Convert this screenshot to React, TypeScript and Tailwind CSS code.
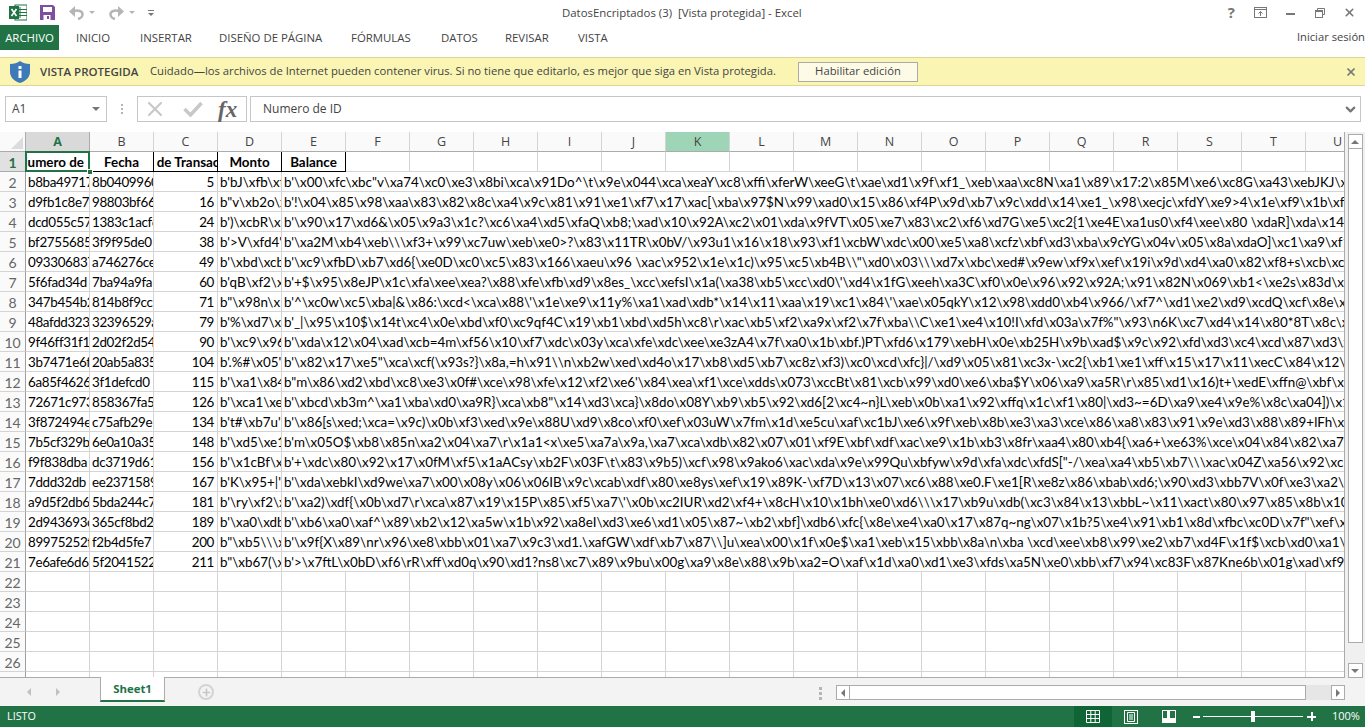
import React from 'react';
import { ChevronDown, Plus, X } from 'lucide-react';

const UI = "font-['Open_Sans','Noto_Sans',sans-serif]";
const LATO = "font-['Lato','Liberation_Sans',sans-serif]";
const CELL = `${LATO} text-[13.4px] text-black`;

const tabs = [
  ['INICIO', 'w-[35px]'],
  ['INSERTAR', 'w-[50px]'],
  ['DISEÑO DE PÁGINA', 'w-[103px]'],
  ['FÓRMULAS', 'w-[61px]'],
  ['DATOS', 'w-[35px]'],
  ['REVISAR', 'w-[44px]'],
  ['VISTA', 'w-[29px]'],
];

const letters = 'ABCDEFGHIJKLMNOPQRSTU'.split('');

const ids = ['b8ba49717', 'd9fb1c8e7', 'dcd055c57', 'bf2755685', '093306837', '5f6fad34d', '347b454b2', '48afdd323', '9f46ff31f1', '3b7471e6f', '6a85f4626', '72671c973', '3f872494e', '7b5cf329b', 'f9f838dba', '7ddd32db', 'a9d5f2db6', '2d943693c', '89975252f', '7e6afe6d6'];
const dates = ['8b0409960', '98803bf66', '1383c1acf6', '3f9f95de0', 'a746276ce', '7ba94a9fa', '814b8f9cc', '32396529a', '2d02f2d54', '20ab5a835', '3f1defcd0', '858367fa5', 'c75afb29e', '6e0a10a35', 'dc3719d61', 'ee2371589', '5bda244c7', '365cf8bd2', 'f2b4d5fe7', '5f2041522'];
const nums = [5, 16, 24, 38, 49, 60, 71, 79, 90, 104, 115, 126, 134, 148, 156, 167, 181, 189, 200, 211];
const montos = [
  String.raw`b'bJ\xfb\xfe'`, String.raw`b"v\xb2o\x1`, String.raw`b')\xcbR\x8`, String.raw`b'>V\xfd4'`, String.raw`b'\xbd\xcb'`,
  String.raw`b'qB\xf2\x8`, String.raw`b"\x98n\x1`, String.raw`b'%\xd7\x9`, String.raw`b'\xc9\x96'`, String.raw`b'.%#\x05'`,
  String.raw`b'\xa1\x84'`, String.raw`b'\xca1\xe`, String.raw`b't#\xb7u'`, String.raw`b'\xd5\xe1`, String.raw`b'\x1cBf\x1`,
  String.raw`b'K\x95+|'`, String.raw`b'\ry\xf2\x`, String.raw`b'\xa0\xdb`, String.raw`b"\xb5\\\x1`, String.raw`b"\xb67(\x`,
];
const balances = [
  String.raw`b'\x00\xfc\xbc"v\xa74\xc0\xe3\x8bi\xca\x91Do^\t\x9e\x044\xca\xeaY\xc8\xffi\xferW\xeeG\t\xae\xd1\x9f\xf1_\xeb\xaa\xc8N\xa1\x89\x17:2\x85M\xe6\xc8G\xa43\xebJKJ\x12`,
  String.raw`b'!\x04\x85\x98\xaa\x83\x82\x8c\xa4\x9c\x81\x91\xe1\xf7\x17\xac[\xba\x97$N\x99\xad0\x15\x86\xf4P\x9d\xb7\x9c\xdd\x14\xe1_\x98\xecjc\xfdY\xe9>4\x1e\xf9\x1b\xf7\x12`,
  String.raw`b'\x90\x17\xd6&\x05\x9a3\x1c?\xc6\xa4\xd5\xfaQ\xb8;\xad\x10\x92A\xc2\x01\xda\x9fVT\x05\xe7\x83\xc2\xf6\xd7G\xe5\xc2{1\xe4E\xa1us0\xf4\xee\x80 \xdaR]\xda\x14\x12`,
  String.raw`b'\xa2M\xb4\xeb\\\xf3+\x99\xc7uw\xeb\xe0>?\x83\x11TR\x0bV/\x93u1\x16\x18\x93\xf1\xcbW\xdc\x00\xe5\xa8\xcfz\xbf\xd3\xba\x9cYG\x04v\x05\x8a\xdaO]\xc1\xa9\xf1\x12`,
  String.raw`b'\xc9\xfbD\xb7\xd6{\xe0D\xc0\xc5\x83\x166\xaeu\x96 \xac\x952\x1e\x1c)\x95\xc5\xb4B\\"\xd0\x03\\\xd7x\xbc\xed#\x9ew\xf9x\xef\x19i\x9d\xd4\xa0\x82\xf8+s\xcb\xc1\x12`,
  String.raw`b'+$\x95\x8eJP\x1c\xfa\xee\xea?\x88\xfe\xfb\xd9\x8es_\xcc\xefsI\x1a(\xa38\xb5\xcc\xd0\'\xd4\x1fG\xeeh\xa3C\xf0\x0e\x96\x92\x92A;\x91\x82N\x069\xb1<\xe2s\x83d\x12`,
  String.raw`b'^\xc0w\xc5\xba|&\x86:\xcd<\xca\x88\'\x1e\xe9\x11y%\xa1\xad\xdb*\x14\x11\xaa\x19\xc1\x84\'\xae\x05qkY\x12\x98\xdd0\xb4\x966/\xf7^\xd1\xe2\xd9\xcdQ\xcf\x8e\x12`,
  String.raw`b'_|\x95\x10$\x14t\xc4\x0e\xbd\xf0\xc9qf4C\x19\xb1\xbd\xd5h\xc8\r\xac\xb5\xf2\xa9x\xf2\x7f\xba\\C\xe1\xe4\x10!I\xfd\x03a\x7f%"\x93\n6K\xc7\xd4\x14\x80*8T\x8c\x12`,
  String.raw`b'\xda\x12\x04\xad\xcb=4m\xf56\x10\xf7\xdc\x03y\xca\xfe\xdc\xee\xe3zA4\x7f\xa0\x1b\xbf.)PT\xfd6\x179\xebH\x0e\xb25H\x9b\xad$\x9c\x92\xfd\xd3\xc4\xcd\x87\xd3\x12`,
  String.raw`b'\x82\x17\xe5"\xca\xcf(\x93s?}\x8a,=h\x91\\n\xb2w\xed\xd4o\x17\xb8\xd5\xb7\xc8z\xf3)\xc0\xcd\xfc}|/\xd9\x05\x81\xc3x-\xc2{\xb1\xe1\xff\x15\x17\x11\xecC\x84\x12\x12`,
  String.raw`b"m\x86\xd2\xbd\xc8\xe3\x0f#\xce\x98\xfe\x12\xf2\xe6'\x84\xea\xf1\xce\xdds\x073\xccBt\x81\xcb\x99\xd0\xe6\xba$Y\x06\xa9\xa5R\r\x85\xd1\x16)t+\xedE\xffn@\xbf\x12`,
  String.raw`b'\xbcd\xb3m^\xa1\xba\xd0\xa9R}\xca\xb8"\x14\xd3\xca}\x8do\x08Y\xb9\xb5\x92\xd6[2\xc4~n}L\xeb\x0b\xa1\x92\xffq\x1c\xf1\x80|\xd3~=6D\xa9\xe4\x9e%\x8c\xa04])\x12`,
  String.raw`b'\x86[s\xed;\xca=\x9c)\x0b\xf3\xed\x9e\x88U\xd9\x8co\xf0\xef\x03uW\x7fm\x1d\xe5cu\xaf\xc1bJ\xe6\x9f\xeb\x8b\xe3\xa3\xce\x86\xa8\x83\x91\x9e\xd3\x88\x89+lFh\x12`,
  String.raw`b'm\x05O$\xb8\x85n\xa2\x04\xa7\r\x1a1<x\xe5\xa7a\x9a,\xa7\xca\xdb\x82\x07\x01\xf9E\xbf\xdf\xac\xe9\x1b\xb3\x8fr\xaa4\x80\xb4{\xa6+\xe63%\xce\x04\x84\x82\xa7\x12`,
  String.raw`b'+\xdc\x80\x92\x17\x0fM\xf5\x1aACsy\xb2F\x03F\t\x83\x9b5)\xcf\x98\x9ako6\xac\xda\x9e\x99Qu\xbfyw\x9d\xfa\xdc\xfdS["-/\xea\xa4\xb5\xb7\\\xac\x04Z\xa56\x92\xc1\x12`,
  String.raw`b'\xda\xebkI\xd9we\xa7\x00\x08y\x06\x06IB\x9c\xcab\xdf\x80\xe8ys\xef\x19\x89K-\xf7D\x13\x07\xc6\x88\xe0.F\xe1[R\xe8z\x86\xbab\xd6;\x90\xd3\xbb7V\x0f\xe3\xa2\x12`,
  String.raw`b'\xa2)\xdf{\x0b\xd7\r\xca\x87\x19\x15P\x85\xf5\xa7\'\x0b\xc2IUR\xd2\xf4+\x8cH\x10\x1bh\xe0\xd6\\\x17\xb9u\xdb(\xc3\x84\x13\xbbL~\x11\xact\x80\x97\x85\x8b\x10\x12`,
  String.raw`b'\xb6\xa0\xaf^\x89\xb2\x12\xa5w\x1b\x92\xa8eI\xd3\xe6\xd1\x05\x87~\xb2\xbf]\xdb6\xfc{\x8e\xe4\xa0\x17\x87q~ng\x07\x1b?5\xe4\x91\xb1\x8d\xfbc\xc0D\x7f"\xef\x12`,
  String.raw`b'\x9f{X\x89\nr\x96\xe8\xbb\x01\xa7\x9c3\xd1.\xafGW\xdf\xb7\x87\\]u\xea\x00\x1f\x0e$\xa1\xeb\x15\xbb\x8a\n\xba \xcd\xee\xb8\x99\xe2\xb7\xd4F\x1f$\xcb\xd0\xa1\x12`,
  String.raw`b'>\x7ftL\x0bD\xf6\rR\xff\xd0q\x90\xd1?ns8\xc7\x89\x9bu\x00g\xa9\x8e\x88\x9b\xa2=O\xaf\x1d\xa0\xd1\xe3\xfds\xa5N\xe0\xbb\xf7\x94\xc83F\x87Kne6b\x01g\xad\xf9\x12`,
];

const headers = ['Fecha', 'Tipo de Transaccion', 'Monto', 'Balance'];

function Undo({ flip }: { flip?: boolean }) {
  return (
    <svg width="15" height="14" viewBox="0 0 15 14" fill="none" className={`ml-[14px] ${flip ? '-scale-x-100' : ''}`}>
      <path d="M0 5.500L6 0v11z" fill="#b5b5b5" />
      <path d="M4 5.500C9 3.500 13.800 5 13.500 8.500 13.300 11 11 12.500 9 13" stroke="#b5b5b5" strokeWidth="2.500" />
    </svg>
  );
}

function TitleBar() {
  return (
    <div className="h-[25px] flex items-center relative">
      <svg width="18" height="17" viewBox="0 0 18 17" className="ml-[9px]">
        <rect x="6" y="1" width="12" height="15" fill="#fff" stroke="#217346" />
        <path d="M11 3v11M6 5.500h12M6 8.500h12M6 11.500h12" stroke="#217346" />
        <rect x="0" y="2" width="10" height="13" fill="#217346" />
        <path d="M2.500 5l5 7M7.500 5l-5 7" stroke="#fff" strokeWidth="1.600" />
      </svg>
      <svg width="15" height="15" viewBox="0 0 15 15" className="ml-[13px]">
        <path d="M0 0h13l2 2v13H0z" fill="#7e4f9e" />
        <rect x="3" y="2" width="9" height="5" fill="#fff" />
        <rect x="3.500" y="10" width="7" height="5" fill="#fff" />
        <rect x="7" y="11" width="2" height="3" fill="#7e4f9e" />
      </svg>
      <Undo />
      <span className="ml-[5px] w-0 h-0 border-x-[3px] border-x-transparent border-t-[3px] border-t-[#b5b5b5]" />
      <Undo flip />
      <span className="ml-[5px] w-0 h-0 border-x-[3px] border-x-transparent border-t-[3px] border-t-[#b5b5b5]" />
      <span className="ml-[13px] flex flex-col items-center gap-[2px]">
        <span className="w-[6px] h-px bg-[#777]" />
        <span className="w-0 h-0 border-x-[3px] border-x-transparent border-t-[3px] border-t-[#777]" />
      </span>
      <div className={`${UI} absolute left-[562px] top-[4px] text-[11.4px] text-[#444] whitespace-pre`}>DatosEncriptados (3)  [Vista protegida] - Excel</div>
      <div className="ml-auto mr-[9px] flex items-center">
        <span className={`${UI} text-[#777] font-bold text-[15px] leading-none`}>?</span>
        <svg width="14" height="11" viewBox="0 0 14 11" fill="none" className="ml-[19px]">
          <rect x=".5" y=".5" width="12" height="10" stroke="#777" />
          <path d="M1 2.500h12M6.500 9V4.500M4.500 6.500l2-2 2 2" stroke="#777" />
        </svg>
        <span className="ml-[18px] mt-[3px] w-[9px] h-[2px] bg-[#777]" />
        <svg width="10" height="10" viewBox="0 0 10 10" fill="none" className="ml-[20px]">
          <path d="M2.500 2.500V.5h7v6h-2" stroke="#777" />
          <rect x=".5" y="2.500" width="7" height="7" stroke="#777" />
          <path d="M1 3.500h6" stroke="#777" />
        </svg>
        <X size={13} strokeWidth={3} className="ml-[18px] text-[#777]" />
      </div>
    </div>
  );
}

function RibbonTabs() {
  return (
    <div className={`${UI} h-[25px] flex items-center text-[11.4px] text-[#444]`}>
      <div className="w-[59px] h-full bg-[#217346] text-white flex items-center justify-center">ARCHIVO</div>
      <div className="ml-[17px] flex gap-[29px]">
        {tabs.map(([name, w]) => (
          <span key={name} className={`${w} whitespace-nowrap`}>{name}</span>
        ))}
      </div>
      <span className="ml-auto text-[11.2px] text-[#444] whitespace-nowrap">Iniciar sesión</span>
    </div>
  );
}

function ProtectedBar() {
  return (
    <div className={`${UI} mt-[7px] h-[29px] bg-[#fbf5b4] border-y border-[#dcd68e] flex items-center text-[11.270px] text-[#444]`}>
      <svg width="20" height="22" viewBox="0 0 20 22" className="ml-[10px]">
        <path d="M10 0c2.500 2 6 3 10 3v8c0 5-4 9-10 11C4 20 0 16 0 11V3c4 0 7.500-1 10-3z" fill="#3f7ab8" />
        <rect x="8.500" y="5" width="3" height="3" fill="#fff" />
        <rect x="8.500" y="9.500" width="3" height="7.500" fill="#fff" />
      </svg>
      <span className="ml-[10px] w-[110px] font-semibold text-[11.500px] text-[#444] whitespace-nowrap">VISTA PROTEGIDA</span>
      <span className="w-[648px] whitespace-nowrap">Cuidado—los archivos de Internet pueden contener virus. Si no tiene que editarlo, es mejor que siga en Vista protegida.</span>
      <button className="w-[120px] h-[20px] bg-[#fdfbe6] border border-[#ababab] flex items-center justify-center text-[#444] text-[11.270px]">Habilitar edición</button>
      <X size={12} strokeWidth={3.500} className="ml-auto mr-[8px] text-[#777]" />
    </div>
  );
}

function FormulaBar() {
  return (
    <div className="mt-[10px] h-[26px] flex items-stretch">
      <div className={`${UI} ml-[5px] w-[102px] border border-[#c6c6c6] flex items-center pl-[6px] pr-[6px] text-[12px] text-[#444]`}>
        A1
        <span className="ml-auto w-0 h-0 border-x-[4px] border-x-transparent border-t-[4px] border-t-[#777]" />
      </div>
      <div className="w-[30px] flex flex-col items-center justify-center gap-[2px]">
        <span className="w-[2px] h-[2px] bg-[#b5b5b5]" />
        <span className="w-[2px] h-[2px] bg-[#b5b5b5]" />
        <span className="w-[2px] h-[2px] bg-[#b5b5b5]" />
      </div>
      <div className="w-[110px] border border-[#c6c6c6] flex items-center">
        <X size={24} strokeWidth={2.200} className="ml-[5px] text-[#c8c8c8]" />
        <svg width="20" height="16" viewBox="0 0 20 16" fill="none" className="ml-[16px]">
          <path d="M1.500 8l6 6L18.500 2" stroke="#c8c8c8" strokeWidth="3.500" />
        </svg>
        <span className="ml-[15px] font-['Liberation_Serif',serif] italic font-bold text-[23px] leading-none text-[#666]">fx</span>
      </div>
      <div className={`${UI} ml-[3px] mr-[4px] flex-1 border border-[#c6c6c6] flex items-center pl-[12px] pr-[2px] text-[12px] text-[#444]`}>
        Numero de ID
        <ChevronDown size={15} strokeWidth={3.500} className="ml-auto text-[#777]" />
      </div>
    </div>
  );
}

function RowHeader({ n, active }: { n?: number; active?: boolean }) {
  return (
    <div className={`${LATO} text-[14px] pt-px w-[26px] shrink-0 h-full flex items-center justify-center border-r border-[#9e9e9e] border-b ${active ? 'bg-[#e1e1e1] text-[#217346] font-bold border-b-[#ababab]' : 'bg-[#fafafa] text-[#666] border-b-[#d4d4d4]'}`}>
      {n}
    </div>
  );
}

function Cell({ text, right, tight }: { text: string; right?: boolean; tight?: boolean }) {
  return (
    <div className={`w-[64px] shrink-0 h-full border-r border-b border-[#d4d4d4] overflow-hidden whitespace-pre flex items-center pt-px pl-[2px] pr-[3px] ${right ? 'justify-end' : ''} ${tight ? 'tracking-[-0.35px]' : ''}`}>
      {text}
    </div>
  );
}

function Sheet() {
  return (
    <div className="mt-[10px] h-[546px] flex">
      <div className="w-[1345px] flex flex-col overflow-hidden border-b border-r border-[#ababab]">
        <div className={`${UI} h-[20px] shrink-0 flex text-[12.500px] text-[#444]`}>
          <div className="w-[26px] shrink-0 bg-[#fafafa] border-r border-b border-[#ababab] flex items-end justify-end p-[2px]">
            <span className="w-0 h-0 border-l-[12px] border-l-transparent border-b-[12px] border-b-[#dcdcdc]" />
          </div>
          {letters.map((l) => (
            <div key={l} className={`w-[64px] shrink-0 pt-px flex items-center justify-center border-r border-b border-b-[#ababab] ${l === 'A' ? 'bg-[#d9d9d9] text-[#217346] font-bold border-r-[#ababab]' : l === 'K' ? 'bg-[#9fd5b7] border-r-[#d4d4d4]' : 'bg-[#fafafa] border-r-[#d4d4d4]'}`}>{l}</div>
          ))}
        </div>
        <div className={`${CELL} h-[20px] shrink-0 flex relative`}>
          <RowHeader n={1} active />
          <div className="relative w-[64px] shrink-0 h-full">
            <div className="h-full overflow-hidden whitespace-pre flex justify-end items-center pt-px pr-[6px] font-bold">Numero de</div>
            <span className="absolute -left-px -top-px w-[65px] h-[21px] border-2 border-[#217346]" />
            <span className="absolute right-[-3px] bottom-[-3px] w-[6px] h-[6px] bg-[#217346] border border-white" />
          </div>
          {headers.map((h) => (
            <div key={h} className="w-[64px] shrink-0 h-full border-r border-b border-black overflow-hidden whitespace-pre flex justify-center items-center pt-px font-bold">{h}</div>
          ))}
          {letters.slice(5).map((l) => <Cell key={l} text="" />)}
        </div>
        {ids.map((id, i) => (
          <div key={id} className={`${CELL} h-[20px] shrink-0 flex`}>
            <RowHeader n={i + 2} />
            <Cell text={id} tight />
            <Cell text={dates[i]} tight />
            <Cell text={String(nums[i])} right tight />
            <Cell text={montos[i]} />
            <div className="flex-1 min-w-0 h-full border-b border-[#d4d4d4] overflow-hidden whitespace-pre flex items-center pt-px pl-[2px]">{balances[i]}</div>
          </div>
        ))}
        {[22, 23, 24, 25, 26, 27].map((n) => (
          <div key={n} className={`${CELL} h-[20px] shrink-0 flex`}>
            <RowHeader n={n === 27 ? undefined : n} />
            {letters.map((l) => <Cell key={l} text="" />)}
          </div>
        ))}
      </div>
      <div className="flex-1 bg-[#f0f0f0] flex flex-col items-center">
        <div className="w-[15px] h-[15px] mt-[2px] bg-white border border-[#ababab] flex items-center justify-center">
          <span className="w-0 h-0 border-x-[4px] border-x-transparent border-b-[4px] border-b-[#777]" />
        </div>
        <div className="w-[15px] h-[494px] bg-white border border-[#ababab] border-t-0" />
        <div className="w-[15px] h-[15px] mt-auto bg-white border border-[#ababab] flex items-center justify-center">
          <span className="w-0 h-0 border-x-[4px] border-x-transparent border-t-[4px] border-t-[#777]" />
        </div>
      </div>
    </div>
  );
}

function TabStrip() {
  return (
    <div className="h-[28px] bg-[#f3f3f3] flex">
      <div className="ml-[27px] w-[33px] mt-[10px] flex justify-between">
        <span className="w-0 h-0 border-y-[4px] border-y-transparent border-r-[4px] border-r-[#c0c0c0]" />
        <span className="w-0 h-0 border-y-[4px] border-y-transparent border-l-[4px] border-l-[#c0c0c0]" />
      </div>
      <div className={`${UI} ml-[40px] w-[65px] h-[25px] -mt-px bg-white border-x border-[#ababab] border-b-2 border-b-[#217346] flex items-center justify-center font-bold text-[11.4px] text-[#217346]`}>Sheet1</div>
      <div className="ml-[33px] mt-[6px] w-[16px] h-[16px] rounded-full border-2 border-[#d4d4d4] flex items-center justify-center">
        <Plus size={11} strokeWidth={3.500} className="text-[#c8c8c8]" />
      </div>
      <div className="ml-[605px] mt-[9px] w-[3px] flex flex-col gap-[2px]">
        <span className="h-[3px] bg-[#b5b5b5]" />
        <span className="h-[3px] bg-[#b5b5b5]" />
        <span className="h-[3px] bg-[#b5b5b5]" />
      </div>
      <div className="ml-[14px] mt-[7px] h-[15px] w-[509px] flex">
        <div className="w-[14px] bg-white border border-[#ababab] flex items-center justify-center">
          <span className="w-0 h-0 border-y-[4px] border-y-transparent border-r-[4px] border-r-[#777]" />
        </div>
        <div className="w-[456px] bg-white border border-[#ababab] border-l-0" />
        <div className="flex-1 bg-[#e6e6e6]" />
        <div className="w-[14px] bg-white border border-[#ababab] flex items-center justify-center">
          <span className="w-0 h-0 border-y-[4px] border-y-transparent border-l-[4px] border-l-[#777]" />
        </div>
      </div>
    </div>
  );
}

function StatusBar() {
  return (
    <div className={`${UI} h-[21px] bg-[#217346] flex items-center text-white text-[10.800px]`}>
      <span className="ml-[7px]">LISTO</span>
      <div className="ml-auto h-full w-[38px] bg-[#0f6535] flex items-center justify-center">
        <svg width="14" height="13" viewBox="0 0 14 13" fill="none"><path d="M.5 .5h13v12H.5zM.5 4.500h13M.5 8.500h13M4.800 .5v12M9.200 .5v12" stroke="#fff" /></svg>
      </div>
      <div className="ml-[12px] w-[14px] h-[14px] border border-white flex items-center justify-center">
        <svg width="10" height="10" viewBox="0 0 10 10" fill="none"><path d="M1.500 .5h7v9h-7zM3 3h4M3 5h4M3 7h4" stroke="#fff" /></svg>
      </div>
      <svg width="14" height="13" viewBox="0 0 14 13" className="ml-[24px]">
        <rect x=".5" y=".5" width="13" height="12" fill="none" stroke="#fff" />
        <path d="M1 8h12v4H1zM5 1h3v7H5z" fill="#fff" />
      </svg>
      <span className="ml-[17px] w-[7px] h-[2px] bg-white" />
      <div className="relative ml-[3px] w-[100px] h-px bg-white">
        <span className="absolute left-[48px] top-[-5px] w-[4px] h-[11px] bg-white" />
      </div>
      <span className="ml-[4px] w-[9px] h-[9px] relative">
        <span className="absolute left-0 top-[3.500px] w-[9px] h-[2px] bg-white" />
        <span className="absolute left-[3.500px] top-0 w-[2px] h-[9px] bg-white" />
      </span>
      <span className="ml-[16px] mr-[7px] w-[26px] text-[11px] whitespace-nowrap">100%</span>
    </div>
  );
}

export default function App() {
  return (
    <div className="w-[1365px] h-[727px] bg-white overflow-hidden flex flex-col">
      <TitleBar />
      <RibbonTabs />
      <ProtectedBar />
      <FormulaBar />
      <Sheet />
      <TabStrip />
      <StatusBar />
    </div>
  );
}
